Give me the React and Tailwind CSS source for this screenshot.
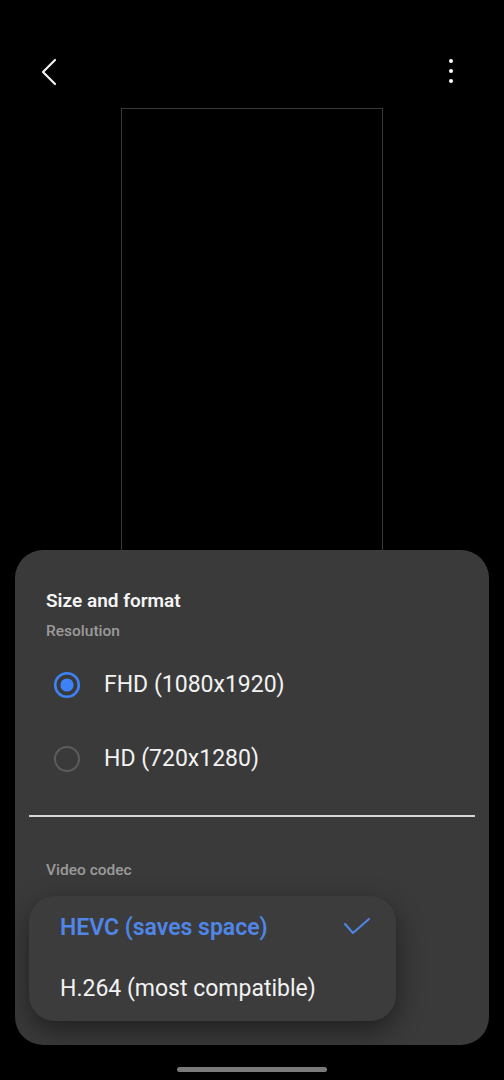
import { useState } from 'react';

const font = { fontFamily: 'Roboto, "Noto Sans", sans-serif' };

function Radio({ checked }) {
  return (
    <svg width="28" height="28" viewBox="0 0 28 28">
      {checked ? (
        <>
          <circle cx="14" cy="14" r="11.8" fill="none" stroke="#3d82f6" strokeWidth="2.6" />
          <circle cx="14" cy="14" r="6.6" fill="#3d82f6" />
        </>
      ) : (
        <circle cx="14" cy="14" r="12" fill="none" stroke="#5c5c5c" strokeWidth="2" />
      )}
    </svg>
  );
}

export default function App() {
  const [res, setRes] = useState('fhd');
  const resolutions = [
    { id: 'fhd', label: 'FHD (1080x1920)' },
    { id: 'hd', label: 'HD (720x1280)' },
  ];

  return (
    <div className="h-[1080px] w-full bg-black flex flex-col overflow-hidden" style={font}>
      {/* top bar */}
      <div className="h-[108px] flex items-start justify-between px-[38px] pt-[54px]">
        <svg width="26" height="36" viewBox="0 0 26 36" className="-ml-[2px]">
          <path d="M19 6 L7 18 L19 30" fill="none" stroke="#f2f2f2" strokeWidth="2.2" strokeLinecap="round" strokeLinejoin="round" />
        </svg>
        <div className="flex flex-col items-center gap-[6px] pt-[5px] mr-[13px]">
          <span className="w-[4px] h-[4px] rounded-full bg-white" />
          <span className="w-[4px] h-[4px] rounded-full bg-white" />
          <span className="w-[4px] h-[4px] rounded-full bg-white" />
        </div>
      </div>

      {/* preview frame */}
      <div className="h-[442px] w-[262px] mx-auto border border-b-0 border-[#3a3a3a]" />

      {/* bottom sheet */}
      <div className="mx-[15px] h-[495px] rounded-[28px] bg-[#3a3a3a] flex flex-col">
        <div className="px-[31px] pt-[40px]">
          <div className="text-[19px] leading-[22px] font-semibold text-[#f4f4f4]">Size and format</div>
          <div className="mt-[9px] text-[15.5px] leading-[20px] font-medium text-[#9a9a9a]">Resolution</div>
        </div>

        <div className="mt-[7px] flex flex-col">
          {resolutions.map((r) => (
            <button
              key={r.id}
              onClick={() => setRes(r.id)}
              className="h-[74px] flex items-center gap-[23px] pl-[38px] text-left"
            >
              <Radio checked={res === r.id} />
              <span className="text-[23px] leading-[26px] text-[#f2f2f2]">{r.label}</span>
            </button>
          ))}
        </div>

        <div className="mt-[19px] mx-[14px] h-[2px] bg-[#d6d6d6]" />

        <div className="mt-[43px] px-[31px] text-[15.5px] leading-[20px] font-medium text-[#9a9a9a]">Video codec</div>

        {/* codec dropdown */}
        <div className="mt-[16px] ml-[14px] w-[367px] h-[125px] rounded-[26px] bg-[#3c3c3c] shadow-[0_10px_28px_rgba(0,0,0,0.45)] flex flex-col">
          <div className="h-[63px] flex items-center justify-between pl-[31px] pr-[25px] pt-[1px]">
            <span className="text-[23px] leading-[26px] font-semibold text-[#4f86e8]">HEVC (saves space)</span>
            <svg width="28" height="20" viewBox="0 0 28 20">
              <path d="M2 6 L10 15 L26 1" fill="none" stroke="#4f86e8" strokeWidth="2" strokeLinecap="round" strokeLinejoin="round" />
            </svg>
          </div>
          <div className="h-[62px] flex items-center pl-[31px] pb-[2px]">
            <span className="text-[23px] leading-[26px] text-[#f2f2f2]">H.264 (most compatible)</span>
          </div>
        </div>
      </div>

      {/* home indicator */}
      <div className="flex-1 flex items-start justify-center pt-[22px]">
        <div className="w-[150px] h-[5px] rounded-full bg-[#7a7a7a]" />
      </div>
    </div>
  );
}
